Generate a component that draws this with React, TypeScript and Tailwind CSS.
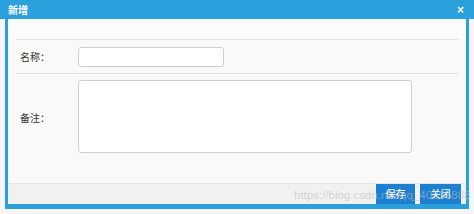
import React from 'react';

export default function App() {
  return (
    <div className="relative w-[474px] h-[214px] bg-[#f5f5f5] overflow-hidden font-['Noto_Sans_CJK_SC',sans-serif]">
      {/* title bar */}
      <div className="h-[19px] bg-[#2aa1dc] flex items-center justify-between pl-[8px] pr-[10px]">
        <span className="text-white text-[10px] font-bold leading-none">新增</span>
        <span className="text-white text-[12px] font-bold leading-none font-['Liberation_Sans',sans-serif]">×</span>
      </div>

      {/* dialog body */}
      <div className="ml-[5px] w-[464px] h-[190px] border-x-[3px] border-b-[5px] border-[#2aa1dc] bg-[#f9f9f9] flex flex-col">
        <div className="h-[20px] bg-[#fbfbfb]" />
        <div className="mx-[8px] border-t border-[#e3e3e3]">
          {/* name row */}
          <div className="h-[34px] flex items-center border-b border-[#e3e3e3]">
            <span className="w-[62px] pl-[4px] text-[10px] text-[#333]">名称：</span>
            <div className="w-[146px] h-[20px] bg-white border border-[#cfcfcf] rounded-[3px]" />
          </div>
          {/* remark row */}
          <div className="h-[109px] flex items-start pt-[6px]">
            <span className="w-[62px] pl-[4px] mt-[30px] text-[10px] text-[#333]">备注：</span>
            <div className="w-[334px] h-[73px] bg-white border border-[#cfcfcf] rounded-[3px]" />
          </div>
        </div>
        {/* footer */}
        <div className="flex-1 bg-[#f1f1f1] border-t border-[#e6e6e6] flex items-end justify-end gap-[5px] pr-[5px]">
          <button className="w-[39px] h-[20px] bg-[#1c7fd1] text-white text-[10px] font-medium leading-none">保存</button>
          <button className="w-[41px] h-[20px] bg-[#1c7fd1] text-white text-[10px] font-medium leading-none">关闭</button>
        </div>
      </div>

      {/* watermark */}
      <span className="absolute left-[294px] top-[190px] text-[11.5px] leading-none text-[#b4bdc6]/60 font-['Liberation_Sans',sans-serif] whitespace-nowrap pointer-events-none">
        https://blog.csdn.net/qq_40035888
      </span>
    </div>
  );
}
